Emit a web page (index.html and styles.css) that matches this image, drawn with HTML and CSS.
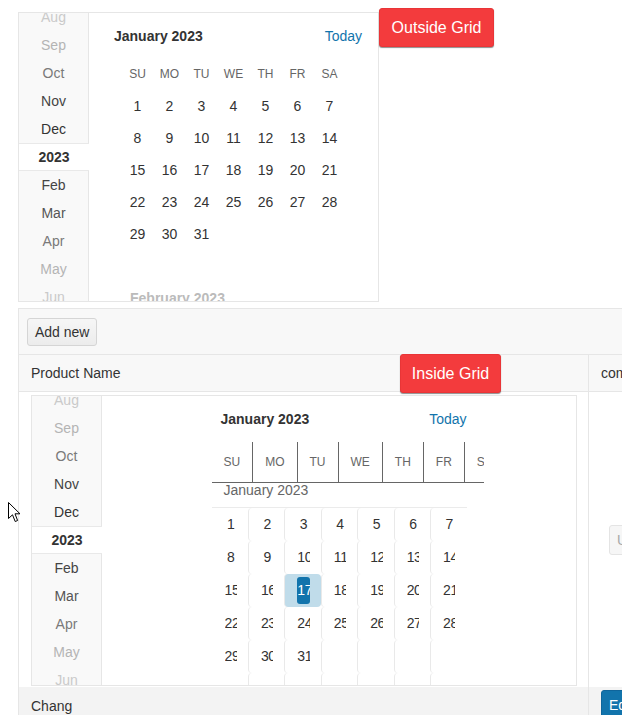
FILE: index.html
```html
<!DOCTYPE html>
<html>
<head>
<meta charset="utf-8">
<link rel="stylesheet" href="styles.css">
</head>
<body>
<div class="page">
  <div class="top-row">
    <div class="cal">
      <div class="months">
        <ul class="month-list">
          <li class="m f5">Aug</li>
          <li class="m f4">Sep</li>
          <li class="m f3">Oct</li>
          <li class="m f1">Nov</li>
          <li class="m f0">Dec</li>
          <li class="year">2023</li>
          <li class="m f1">Feb</li>
          <li class="m f2">Mar</li>
          <li class="m f3">Apr</li>
          <li class="m f4">May</li>
          <li class="m f5">Jun</li>
        </ul>
      </div>
      <div class="cal-main">
        <div class="cal-title"><span class="title">January 2023</span><span class="today">Today</span></div>
        <div class="dow"><span>SU</span><span>MO</span><span>TU</span><span>WE</span><span>TH</span><span>FR</span><span>SA</span></div>
        <div class="dates">
          <span>1</span><span>2</span><span>3</span><span>4</span><span>5</span><span>6</span><span>7</span>
          <span>8</span><span>9</span><span>10</span><span>11</span><span>12</span><span>13</span><span>14</span>
          <span>15</span><span>16</span><span>17</span><span>18</span><span>19</span><span>20</span><span>21</span>
          <span>22</span><span>23</span><span>24</span><span>25</span><span>26</span><span>27</span><span>28</span>
          <span>29</span><span>30</span><span>31</span>
        </div>
        <div class="next-title">February 2023</div>
      </div>
    </div>
    <button class="btn-red outside">Outside Grid</button>
  </div>

  <div class="grid">
    <div class="toolbar"><button class="btn">Add new</button></div>
    <div class="grid-row head">
      <div class="c1">Product Name<button class="btn-red inside">Inside Grid</button></div>
      <div class="c2">command</div>
    </div>
    <div class="grid-row edit">
      <div class="c1">
        <div class="cal cal-in">
          <div class="months">
            <ul class="month-list">
              <li class="m f5">Aug</li>
              <li class="m f4">Sep</li>
              <li class="m f3">Oct</li>
              <li class="m f1">Nov</li>
              <li class="m f0">Dec</li>
              <li class="year">2023</li>
              <li class="m f1">Feb</li>
              <li class="m f2">Mar</li>
              <li class="m f3">Apr</li>
              <li class="m f4">May</li>
              <li class="m f5">Jun</li>
            </ul>
          </div>
          <div class="cal-main in-main">
            <div class="in-block">
              <div class="in-title"><span class="title">January 2023</span><span class="today">Today</span></div>
              <div class="in-head"><span>SU</span><span>MO</span><span>TU</span><span>WE</span><span>TH</span><span>FR</span><span>SA</span></div>
              <div class="in-caption">January 2023</div>
              <div class="in-dates">
                <div class="d"><span>1</span></div><div class="d"><span>2</span></div><div class="d"><span>3</span></div><div class="d"><span>4</span></div><div class="d"><span>5</span></div><div class="d"><span>6</span></div><div class="d"><span>7</span></div>
                <div class="d"><span>8</span></div><div class="d"><span>9</span></div><div class="d"><span>10</span></div><div class="d"><span>11</span></div><div class="d"><span>12</span></div><div class="d"><span>13</span></div><div class="d"><span>14</span></div>
                <div class="d"><span>15</span></div><div class="d"><span>16</span></div><div class="d sel"><span>17</span></div><div class="d"><span>18</span></div><div class="d"><span>19</span></div><div class="d"><span>20</span></div><div class="d"><span>21</span></div>
                <div class="d"><span>22</span></div><div class="d"><span>23</span></div><div class="d"><span>24</span></div><div class="d"><span>25</span></div><div class="d"><span>26</span></div><div class="d"><span>27</span></div><div class="d"><span>28</span></div>
                <div class="d"><span>29</span></div><div class="d"><span>30</span></div><div class="d"><span>31</span></div><div class="d"></div><div class="d"></div><div class="d"></div><div class="d"></div>
                <div class="d"></div><div class="d"></div><div class="d"></div><div class="d"></div><div class="d"></div><div class="d"></div><div class="d"></div>
              </div>
            </div>
          </div>
        </div>
      </div>
      <div class="c2 c2-mid"><button class="btn-ghost">Update</button></div>
    </div>
    <div class="grid-row alt">
      <div class="c1">Chang</div>
      <div class="c2"><button class="btn-blue">Edit</button></div>
    </div>
  </div>

  <svg class="cursor" width="13" height="21" viewBox="0 0 13 21"><path d="M0.5 0.5 L0.5 16.5 L4.5 12.8 L7.2 19.5 L9.6 18.5 L7 11.8 L12 11.8 Z" fill="#fff" stroke="#000" stroke-width="1" stroke-linejoin="miter"/></svg>
</div>
</body>
</html>
```

FILE: styles.css
```css
html, body {
  margin: 0;
  padding: 0;
}
body {
  font-family: "Liberation Sans", Arial, sans-serif;
  font-size: 14px;
  color: #333;
  background: #fff;
  overflow: hidden;
  width: 622px;
  height: 715px;
}
.page {
  position: relative;
  padding: 8px 0 0 18px;
}
.top-row {
  display: flex;
  align-items: flex-start;
}

/* calendar */
.cal {
  margin-top: 4px;
  width: 361px;
  height: 290px;
  box-sizing: border-box;
  border: 1px solid #e6e6e6;
  display: flex;
  overflow: hidden;
  background: #fff;
}
.months {
  width: 70px;
  flex: none;
  overflow: hidden;
}
.month-list {
  list-style: none;
  margin: -10px 0 0;
  padding: 0;
}
.month-list li {
  height: 28px;
  line-height: 28px;
  text-align: center;
  box-sizing: border-box;
}
.month-list .m {
  background: #f9f9f9;
  border-right: 1px solid #e6e6e6;
}
.month-list .year {
  background: #fff;
  font-weight: bold;
  color: #333;
  border-top: 1px solid #e9e9e9;
  border-bottom: 1px solid #e9e9e9;
  line-height: 26px;
}
.f0 { color: #333; }
.f1 { color: #444; }
.f2 { color: #555; }
.f3 { color: #7a7a7a; }
.f4 { color: #b4b4b4; }
.f5 { color: #cacaca; }

.cal-main {
  flex: 1;
  overflow: hidden;
}
.cal-title {
  display: flex;
  justify-content: space-between;
  height: 32px;
  line-height: 32px;
  margin-top: 7px;
  padding: 0 16px 0 25px;
}
.title {
  font-weight: bold;
}
.today {
  color: #1274ac;
}
.dow, .dates {
  width: 224px;
  margin: 0 auto;
  display: grid;
  grid-template-columns: repeat(7, 32px);
  grid-auto-rows: 32px;
  text-align: center;
}
.dow {
  margin-top: 6px;
  font-size: 12px;
  color: #666;
  line-height: 32px;
}
.dates span {
  line-height: 32px;
}
.next-title {
  margin: 40px 0 0 41px;
  font-weight: bold;
  color: #bbb;
  line-height: 16px;
}

/* buttons */
.btn-red {
  margin: 0;
  height: 39px;
  padding: 0;
  border: 1px solid #e93537;
  border-radius: 3px;
  background: #f33b3d;
  color: #fff;
  font-family: "Liberation Sans", Arial, sans-serif;
  font-size: 16px;
  text-align: center;
  box-shadow: 0 1px 1px rgba(0, 0, 0, 0.45);
}
.outside {
  width: 115px;
}
.btn {
  height: 28px;
  padding: 0 7px;
  border: 1px solid #d5d5d5;
  border-radius: 3px;
  background: linear-gradient(#f6f6f6, #ececec);
  color: #333;
  font-family: "Liberation Sans", Arial, sans-serif;
  font-size: 14px;
}
.btn-ghost {
  height: 30px;
  padding: 0 7px;
  border: 1px solid #e4e4e4;
  border-radius: 3px;
  background: #f6f6f6;
  color: #a8a8a8;
  font-family: "Liberation Sans", Arial, sans-serif;
  font-size: 14px;
}
.btn-blue {
  height: 30px;
  padding: 0 7px;
  border: 1px solid #0f659b;
  border-radius: 3px;
  background: #1274ac;
  color: #fff;
  font-family: "Liberation Sans", Arial, sans-serif;
  font-size: 14px;
}

/* grid */
.grid {
  margin-top: 6px;
  width: 720px;
  border: 1px solid #e6e6e6;
  background: #fff;
}
.toolbar {
  height: 46px;
  box-sizing: border-box;
  padding: 9px 8px;
  background: #f8f8f8;
  border-bottom: 1px solid #e6e6e6;
}
.grid-row {
  display: grid;
  grid-template-columns: 570px 1fr;
}
.c1 {
  border-right: 1px solid #e6e6e6;
  padding: 0 12px;
  position: relative;
}
.c2 {
  padding: 0 12px;
  white-space: nowrap;
  overflow: hidden;
}
.head {
  background: #f8f8f8;
  border-bottom: 1px solid #e6e6e6;
  height: 37px;
  box-sizing: border-box;
}
.head .c1, .head .c2 {
  line-height: 36px;
}
.inside {
  position: absolute;
  left: 381px;
  top: -1px;
  width: 101px;
  line-height: normal;
}
.edit {
  height: 295px;
}
.edit .c1 {
  padding: 3px 12px 1px;
}
.c2-mid {
  display: flex;
  align-items: center;
  padding-left: 20px;
}
.cal-in {
  margin: 0;
  width: 546px;
  height: 291px;
}
.alt {
  background: #f3f3f3;
  height: 40px;
}
.alt .c1 {
  line-height: 38px;
}
.alt .c2 {
  padding-top: 3px;
}

/* inner calendar */
.in-main {
  display: flex;
  justify-content: center;
}
.in-block {
  width: 255px;
  flex: none;
}
.in-title {
  display: flex;
  justify-content: space-between;
  height: 32px;
  line-height: 32px;
  margin-top: 7px;
  padding-left: 9px;
}
.in-head {
  margin-top: 7px;
  width: 272px;
  height: 41px;
  box-sizing: border-box;
  display: flex;
  overflow: hidden;
  white-space: nowrap;
  border-bottom: 1px solid #666;
  font-size: 12px;
  color: #666;
}
.in-head span {
  flex: none;
  padding: 0 12px;
  line-height: 40px;
  border-left: 1px solid #666;
}
.in-head span:first-child {
  border-left: none;
}
.in-caption {
  height: 24px;
  line-height: 14px;
  padding-left: 12px;
  color: #666;
}
.in-dates {
  display: grid;
  grid-template-columns: repeat(7, minmax(0, 1fr));
  grid-auto-rows: 33px;
  border-top: 1px solid #ebebeb;
}
.in-dates .d {
  min-width: 0;
  box-sizing: border-box;
  padding: 3px 11px 3px 12px;
  border-left: 1px solid #e9e9e9;
  border-radius: 4px;
}
.in-dates .d:nth-child(7n+1) {
  border-left-color: transparent;
}
.in-dates .d span {
  display: block;
  height: 27px;
  line-height: 27px;
  overflow: hidden;
  white-space: nowrap;
  text-align: center;
  letter-spacing: -0.4px;
  color: #333;
}
.in-dates .sel {
  background: #c0dcea;
}
.in-dates .sel span {
  background: #1274ac;
  color: #fff;
  border-radius: 3px;
}

.cursor {
  position: absolute;
  left: 8px;
  top: 502px;
}
```
